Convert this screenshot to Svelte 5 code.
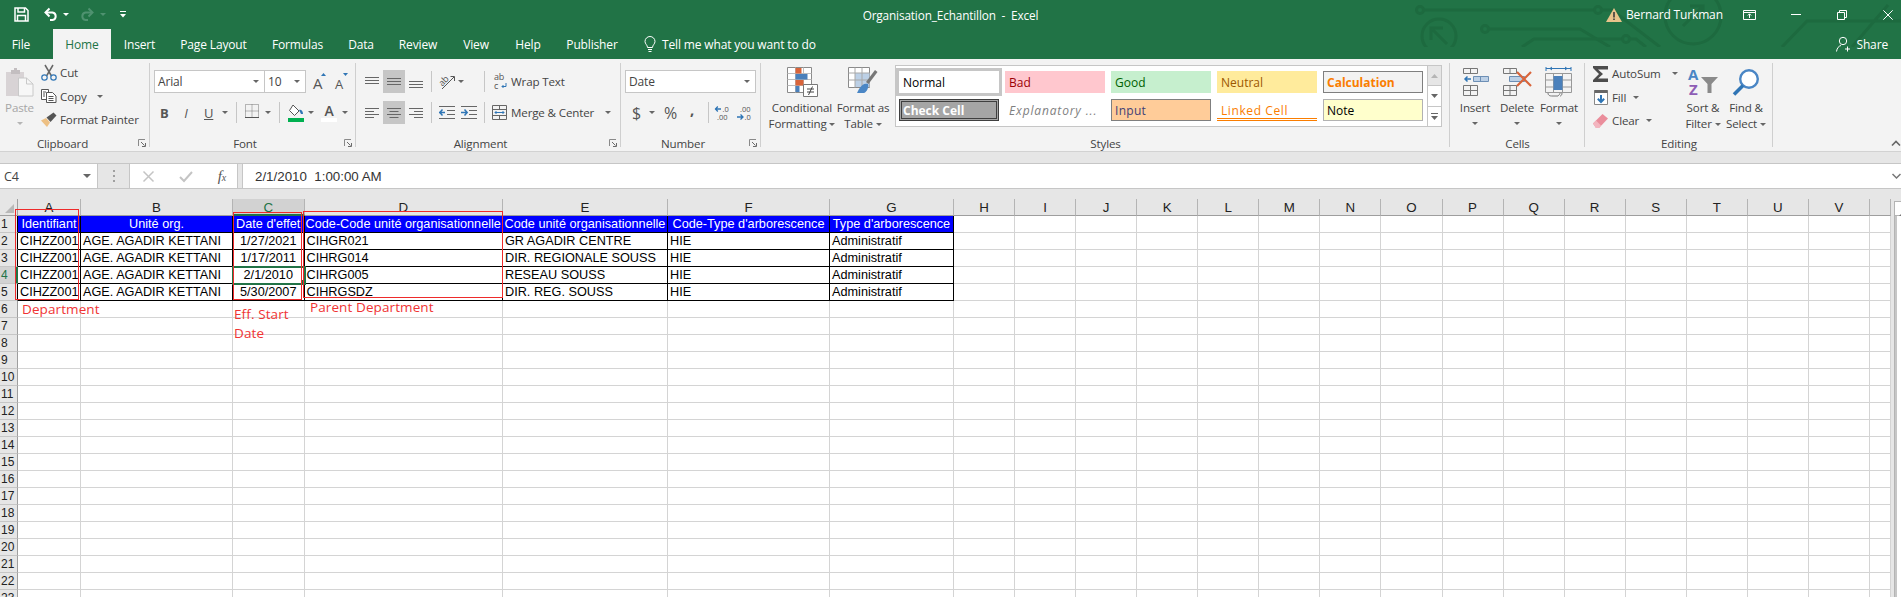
<script>
  const tabs = ["File", "Home", "Insert", "Page Layout", "Formulas", "Data", "Review", "View", "Help", "Publisher"];

  const columns = [
    { name: "A", width: 63 },
    { name: "B", width: 152 },
    { name: "C", width: 71.5 },
    { name: "D", width: 198.5 },
    { name: "E", width: 165 },
    { name: "F", width: 162 },
    { name: "G", width: 124 },
    ...["H", "I", "J", "K", "L", "M", "N", "O", "P", "Q", "R", "S", "T", "U", "V"].map((name) => ({ name, width: 61.07 })),
    { name: "", width: 21 },
  ];
  const gridColumns = "18px " + columns.map((c) => c.width + "px").join(" ");

  const header = ["Identifiant", "Unité org.", "Date d'effet", "Code-Code unité organisationnelle", "Code unité organisationnelle", "Code-Type d'arborescence", "Type d'arborescence"];
  const records = [
    ["CIHZZ001", "AGE. AGADIR KETTANI", "1/27/2021", "CIHGR021", "GR AGADIR CENTRE", "HIE", "Administratif"],
    ["CIHZZ001", "AGE. AGADIR KETTANI", "1/17/2011", "CIHRG014", "DIR. REGIONALE SOUSS", "HIE", "Administratif"],
    ["CIHZZ001", "AGE. AGADIR KETTANI", "2/1/2010", "CIHRG005", "RESEAU SOUSS", "HIE", "Administratif"],
    ["CIHZZ001", "AGE. AGADIR KETTANI", "5/30/2007", "CIHRGSDZ", "DIR. REG. SOUSS", "HIE", "Administratif"],
  ];
  const rowNumbers = Array.from({ length: 23 }, (_, i) => i + 1);

  const cellText = (row, col) => {
    if (row === 1) return header[col] ?? "";
    return records[row - 2]?.[col] ?? "";
  };
  const isTable = (row, col) => row <= 5 && col < 7;
  const isCentered = (row, col) => row === 1 || (row <= 5 && (col === 0 || col === 2));

  const styleCells = [
    { label: "Normal", cls: "normal" },
    { label: "Bad", cls: "bad" },
    { label: "Good", cls: "good" },
    { label: "Neutral", cls: "neutral" },
    { label: "Calculation", cls: "calc" },
    { label: "Check Cell", cls: "check" },
    { label: "Explanatory ...", cls: "expl" },
    { label: "Input", cls: "input" },
    { label: "Linked Cell", cls: "linked" },
    { label: "Note", cls: "memo" },
  ];
</script>

{#snippet caret()}
  <svg class="caret" width="6" height="3" viewBox="0 0 6 3"><path d="M0 0h6L3 3z" fill="#666" /></svg>
{/snippet}

{#snippet launcher()}
  <svg class="launcher" width="8" height="8" viewBox="0 0 8 8"><path d="M.5 7V.5H7" fill="none" stroke="#8a8a8a" /><path d="M3 3l3.5 3.5M7.500 4v3.500H4" fill="none" stroke="#6a6a6a" /></svg>
{/snippet}

{#snippet lines(rows)}
  <svg width="14" height="14" viewBox="0 0 14 14">
    {#each rows as r}
      <path d="M{r[0]} {r[2]}H{r[1]}" stroke="#666" stroke-width="1" />
    {/each}
  </svg>
{/snippet}

<div class="app">
  <div class="titlebar">
    <svg class="circuit" width="501" height="47" viewBox="1400 0 501 47" fill="none" stroke="#1d6a3f" stroke-width="3">
      <circle cx="1420" cy="10" r="3.5" />
      <path d="M1424 10H1594" />
      <circle cx="1598" cy="10" r="3.5" />
      <path d="M1602 10H1612L1660 47" />
      <circle cx="1439" cy="36" r="17" />
      <path d="M1447 44L1433 30M1431 40V28H1443" />
      <circle cx="1485" cy="29" r="3.5" />
      <path d="M1489 29H1580L1610 47" />
      <path d="M1522 47L1534 39H1622" />
      <circle cx="1626" cy="39" r="3.5" />
      <path d="M1630 39H1636L1646 47" />
      <circle cx="1693" cy="16" r="28" />
      <path d="M1683 26L1703 6M1690 6H1703V19" />
      <path d="M1782 47L1807 21H1901M1852 47L1888 5" />
    </svg>

    <div class="title-row">
      <div class="qat">
        <svg width="15" height="15" viewBox="0 0 15 15" fill="none" stroke="#fff" stroke-width="1.5">
          <path d="M1 1h10.5L14 3.5V14H1z" /><path d="M4 1v4h6.5V1M3.5 14V8.5h8V14" />
        </svg>
        <svg class="undo" width="15" height="15" viewBox="0 0 15 15" fill="none" stroke="#fff" stroke-width="2">
          <path d="M3 5.5h6.5a3.8 3.8 0 0 1 0 7.5H7" /><path d="M6.5 1.5L2.5 5.5l4 4" />
        </svg>
        <svg class="caret-q" width="6" height="3" viewBox="0 0 6 3"><path d="M0 0h6L3 3z" fill="#fff" /></svg>
        <svg class="redo" width="15" height="15" viewBox="0 0 15 15" fill="none" stroke="#4f9270" stroke-width="2">
          <path d="M12 5.5H5.5a3.8 3.8 0 0 0 0 7.5H8" /><path d="M8.5 1.5l4 4-4 4" />
        </svg>
        <svg class="caret-q" width="6" height="3" viewBox="0 0 6 3"><path d="M0 0h6L3 3z" fill="#4f9270" /></svg>
        <svg class="more" width="6" height="7" viewBox="0 0 6 7"><path d="M0 .5h6" stroke="#fff" /><path d="M0 3h6L3 6.5z" fill="#fff" /></svg>
      </div>
      <div class="doc-title">Organisation_Echantillon&nbsp; -&nbsp; Excel</div>
      <div class="account">
        <svg width="16" height="14" viewBox="0 0 16 14"><path d="M8 0l8 14H0z" fill="#e8c38b" /><path d="M7.2 4h1.6v5.5H7.2zM7.2 10.5h1.6V12H7.2z" fill="#3a3a3a" /></svg>
        <span class="user">Bernard Turkman</span>
        <svg class="ribbon-opt" width="13" height="10" viewBox="0 0 13 10" fill="none" stroke="#fff"><path d="M.5.500h12v9H.5zM.5 2.500h12M6.500 8V4M4.800 5.500l1.700-1.700 1.700 1.700" /></svg>
        <svg class="minimize" width="10" height="1" viewBox="0 0 10 1"><path d="M0 .5h10" stroke="#fff" /></svg>
        <svg class="restore" width="10" height="10" viewBox="0 0 10 10" fill="none" stroke="#fff"><path d="M.5 2.500h7v7h-7zM2.500 2.500v-2h7v7h-2" /></svg>
        <svg class="close" width="10" height="10" viewBox="0 0 10 10" fill="none" stroke="#fff"><path d="M.3.3l9.400 9.400M9.700.3L.3 9.700" /></svg>
      </div>
    </div>

    <div class="tab-row">
      <div class="tabs">
        {#each tabs as tab}
          <div class="tab" class:active={tab === "Home"}>{tab}</div>
        {/each}
      </div>
      <svg class="bulb" width="12" height="17" viewBox="0 0 12 17" fill="none" stroke="#fff"><path d="M3.500 11.500C3.500 9 1 8 1 5.500a5 5 0 0 1 10 0C11 8 8.500 9 8.500 11.500zM4 13.500h4M4.500 15.500h3" /></svg>
      <div class="tell">Tell me what you want to do</div>
      <div class="share">
        <svg width="14" height="16" viewBox="0 0 14 16" fill="none" stroke="#fff"><circle cx="7" cy="5" r="3.700" /><path d="M.5 15.500c.5-3.500 2.300-5.500 4.500-6M9 13h5M11.500 10.500v5" /></svg>
        <span>Share</span>
      </div>
    </div>
  </div>

  <div class="ribbon">
    <section class="group w-clip">
      <div class="body flex">
        <div class="big paste">
          <svg width="29" height="30" viewBox="0 0 29 30">
            <path d="M1 5h18v24H1z" fill="#d8d3d5" /><path d="M6 3h3V1h3v2h3v4H6z" fill="#c3bec0" />
            <path d="M13.500 11h8l6.500 6v12H13.500z" fill="#f7f7f7" stroke="#c9c9c9" /><path d="M21.500 11v6h6.500" fill="none" stroke="#c9c9c9" />
          </svg>
          <div class="big-label dim">Paste</div>
          <svg class="caret second" width="6" height="3" viewBox="0 0 6 3"><path d="M0 0h6L3 3z" fill="#b5b5b5" /></svg>
        </div>
        <div class="small-col">
          <div class="small-row">
            <svg width="16" height="16" viewBox="0 0 16 16" fill="none"><path d="M4 0l6.500 11M12 0L5.500 11" stroke="#666" stroke-width="1.500" /><circle cx="3.500" cy="12.500" r="2.700" stroke="#2f75b5" stroke-width="1.200" /><circle cx="12.500" cy="12.500" r="2.700" stroke="#2f75b5" stroke-width="1.200" /></svg>
            <span class="ml3">Cut</span>
          </div>
          <div class="small-row">
            <svg width="16" height="14" viewBox="0 0 16 14" fill="#fff" stroke="#555"><path d="M.5.500h7v10h-7z" /><path d="M5.500 3.500h6l3.500 3.500v6.500H5.500z" /><path d="M7.500 7.500h5M7.500 9.500h5M7.500 11.500h5M2 3h3M2 5h2M2 7h2" fill="none" /></svg>
            <span class="ml3 w-copy">Copy</span>
            {@render caret()}
          </div>
          <div class="small-row">
            <svg width="16" height="15" viewBox="0 0 16 15"><path d="M0 8.500l5-2.500 4 4.500-3 4.500z" fill="#edc084" /><path d="M5.500 5.500L12.500.5l3 3L9.500 10z" fill="#555" /></svg>
            <span class="ml3">Format Painter</span>
          </div>
        </div>
      </div>
      <div class="label-row pr9"><span class="group-label">Clipboard</span>{@render launcher()}</div>
    </section>

    <section class="group w-font">
      <div class="body two-rows">
        <div class="row ml4">
          <div class="combo w-fontname"><span>Arial</span>{@render caret()}</div>
          <div class="combo w-fontsize"><span>10</span>{@render caret()}</div>
          <svg class="ml7" width="13" height="17" viewBox="0 0 13 17"><text x="0" y="16" class="ico-a big-a">A</text><path d="M8 3l2.500-3L13 3z" fill="#2f75b5" /></svg>
          <svg class="ml9" width="13" height="17" viewBox="0 0 13 17"><text x="0" y="16" class="ico-a">A</text><path d="M8 0h5l-2.500 3z" fill="#2f75b5" /></svg>
        </div>
        <div class="row">
          <b class="fmt ml10">B</b>
          <i class="fmt ml14">I</i>
          <u class="fmt w9 ml14">U</u>
          <span class="ml9 flexc">{@render caret()}</span>
          <span class="sep ml8"></span>
          <svg class="ml8" width="18" height="18" viewBox="0 0 18 18" fill="none" stroke="#777" stroke-dasharray="1 1"><path d="M.5.500h13v13H.5zM7 .5v13M.5 7h13" /><path d="M0 13.500h14" stroke="#555" stroke-dasharray="none" /></svg>
          <span class="ml2 flexc">{@render caret()}</span>
          <span class="sep ml8"></span>
          <svg class="ml8" width="16" height="18" viewBox="0 0 16 18"><path d="M5 1l6 6-4.500 4.500-5-5z" fill="#fff" stroke="#555" /><path d="M11 6c2-1 4 1 4 4h-2z" fill="#2f75b5" /><path d="M0 14h16v4H0z" fill="#00b050" /></svg>
          <span class="ml4 flexc">{@render caret()}</span>
          <div class="color-a ml7">A</div>
          <span class="ml5 flexc">{@render caret()}</span>
        </div>
      </div>
      <div class="label-row"><span class="group-label">Font</span>{@render launcher()}</div>
    </section>

    <section class="group w-align">
      <div class="body two-rows">
        <div class="row">
          <div class="align-btn ml5">{@render lines([[0, 14, 2.5], [0, 14, 5.5], [0, 14, 8.5]])}</div>
          <div class="align-btn on">{@render lines([[0, 14, 3.5], [0, 14, 6.5], [0, 14, 9.5]])}</div>
          <div class="align-btn">{@render lines([[0, 14, 6.5], [0, 14, 9.5], [0, 14, 12.5]])}</div>
          <span class="sep ml4"></span>
          <svg class="ml7" width="17" height="17" viewBox="0 0 17 17"><text x="0" y="10" class="ico-ab" transform="rotate(-45 6 8)">ab</text><path d="M3 16L15 4M11.500 3.500H15.500V8" fill="none" stroke="#555" /></svg>
          <span class="ml2 flexc">{@render caret()}</span>
          <span class="sep ml20"></span>
          <svg class="ml9" width="13" height="17" viewBox="0 0 13 17"><text x="0" y="7" class="ico-ab">ab</text><text x="0" y="16" class="ico-ab">c</text><path d="M12 10v3.500H8M9.500 12L8 13.500 9.500 15" fill="none" stroke="#2f75b5" /></svg>
          <span class="ml4">Wrap Text</span>
        </div>
        <div class="row">
          <div class="align-btn ml5">{@render lines([[0, 14, 2.5], [0, 9, 5.5], [0, 14, 8.5], [0, 9, 11.5]])}</div>
          <div class="align-btn on">{@render lines([[0, 14, 2.5], [2.5, 11.5, 5.5], [0, 14, 8.5], [2.5, 11.5, 11.5]])}</div>
          <div class="align-btn">{@render lines([[0, 14, 2.5], [5, 14, 5.5], [0, 14, 8.5], [5, 14, 11.5]])}</div>
          <span class="sep ml4"></span>
          <svg class="ml7" width="16" height="14" viewBox="0 0 16 14"><path d="M0 .5h16M8 4.500h8M8 8.500h8M0 12.500h16" stroke="#666" /><path d="M0 6.500h6M3.500 3.500L.8 6.500l2.700 3" fill="none" stroke="#2f75b5" stroke-width="1.500" /></svg>
          <svg class="ml6" width="16" height="14" viewBox="0 0 16 14"><path d="M0 .5h16M8 4.500h8M8 8.500h8M0 12.500h16" stroke="#666" /><path d="M0 6.500h6M3.500 3.500l2.700 3-2.700 3" fill="none" stroke="#2f75b5" stroke-width="1.500" /></svg>
          <span class="sep ml7"></span>
          <svg class="ml7" width="15" height="15" viewBox="0 0 15 15" fill="none"><path d="M.5.500h14v14H.5zM.5 4.500h14M.5 10.500h14M7.500.5v4M7.500 10.500v4" stroke="#666" /><path d="M3 7.500h9M4.500 6L3 7.500 4.500 9M10.500 6L12 7.500 10.500 9" stroke="#2f75b5" /></svg>
          <span class="ml4 w-merge">Merge &amp; Center</span>
          <span class="ml9 flexc">{@render caret()}</span>
        </div>
      </div>
      <div class="label-row"><span class="group-label">Alignment</span>{@render launcher()}</div>
    </section>

    <section class="group w-number">
      <div class="body two-rows">
        <div class="row ml4">
          <div class="combo w-numfmt"><span>Date</span>{@render caret()}</div>
        </div>
        <div class="row">
          <span class="fmt-big ml11">$</span>
          <span class="ml9 flexc">{@render caret()}</span>
          <span class="fmt-big w12 ml9">%</span>
          <b class="comma ml14">,</b>
          <span class="sep ml13"></span>
          <svg class="ml6" width="16" height="16" viewBox="0 0 16 16"><path d="M0 4h6M2.800 1.500L.5 4l2.300 2.500" fill="none" stroke="#2f75b5" stroke-width="1.300" /><text x="7.500" y="6.500" class="ico-dec">.0</text><text x="2" y="14.500" class="ico-dec">.00</text></svg>
          <svg class="ml6" width="16" height="16" viewBox="0 0 16 16"><text x="3" y="6.500" class="ico-dec">.00</text><path d="M0 12h6M3.500 9.500L6 12l-2.500 2.500" fill="none" stroke="#2f75b5" stroke-width="1.300" /><text x="7.500" y="14.500" class="ico-dec">.0</text></svg>
        </div>
      </div>
      <div class="label-row"><span class="group-label">Number</span>{@render launcher()}</div>
    </section>

    <section class="group w-styles">
      <div class="body flex">
        <div class="big w-cond ml5">
          <svg width="31" height="30" viewBox="0 0 31 30">
            <path d="M.5.500h24v25H.5z" fill="#fff" stroke="#8a8a8a" />
            <path d="M8.500.5v25M16.500.5v25M.5 6.500h24M.5 12.500h24M.5 18.500h24" stroke="#bdbdbd" />
            <path d="M8.500 1h6v5.500h-6zM8.500 13h8v5.500h-8z" fill="#d9643a" /><path d="M8.500 7h12v5.500h-12zM8.500 19h4v6h-4z" fill="#4a80bb" />
            <path d="M16.500 17.500h14v12h-14z" fill="#fff" stroke="#777" /><path d="M20 22h7M20 25h7M25.500 19.500l-4 8.500" stroke="#444" fill="none" />
          </svg>
          <div class="big-label">Conditional</div>
          <div class="big-label">Formatting {@render caret()}</div>
        </div>
        <div class="big w-table">
          <svg width="30" height="30" viewBox="0 0 30 30">
            <path d="M.5.500h21v20H.5z" fill="#fff" stroke="#8a8a8a" /><path d="M7 6h14.500v14H7z" fill="#bcd0e6" />
            <path d="M7 .5v20M14 .5v20M.5 6h21M.5 13h21" stroke="#a8a8a8" />
            <path d="M18 15L27 3l2.500 2-9 12z" fill="#777" /><path d="M11 22c3-5 6-6 9-5 1 3-1 8-4 9h-7z" fill="#4a86c5" />
          </svg>
          <div class="big-label">Format as</div>
          <div class="big-label">Table {@render caret()}</div>
        </div>
        <div class="gallery ml7">
          {#each styleCells as s}
            <div class="style-cell {s.cls}">{s.label}</div>
          {/each}
        </div>
        <div class="gallery-scroll">
          <div class="gs off"><svg width="7" height="4" viewBox="0 0 7 4"><path d="M0 4L3.500 0 7 4z" fill="#b5b5b5" /></svg></div>
          <div class="gs"><svg width="7" height="4" viewBox="0 0 7 4"><path d="M0 0h7L3.500 4z" fill="#666" /></svg></div>
          <div class="gs"><svg width="7" height="7" viewBox="0 0 7 7"><path d="M0 .5h7" stroke="#666" /><path d="M0 3h7L3.500 7z" fill="#666" /></svg></div>
        </div>
      </div>
      <div class="label-row plain"><span class="group-label">Styles</span></div>
    </section>

    <section class="group w-cells">
      <div class="body flex">
        <div class="big w42 ml4">
          <svg width="27" height="28" viewBox="0 0 27 28" fill="none" stroke="#777">
            <path d="M1.500.5h14v5h-14zM8.500.5v5M1.500 17.500h14v10h-14zM8.500 17.500v10M1.500 22.500h14" />
            <path d="M11.500 8.500h15v5h-15z" fill="#bcd0e6" stroke="#6d8fb5" /><path d="M18.500 8.500v5" stroke="#6d8fb5" />
            <path d="M3 11h6M5.500 8.500L3 11l2.500 2.500" stroke="#2f75b5" stroke-width="1.500" />
          </svg>
          <div class="big-label">Insert</div>
          <svg class="caret second" width="6" height="3" viewBox="0 0 6 3"><path d="M0 0h6L3 3z" fill="#666" /></svg>
        </div>
        <div class="big w42">
          <svg width="30" height="28" viewBox="0 0 30 28" fill="none" stroke="#777">
            <path d="M1.500.5h13v5h-13zM8 .5v5M1.500 17.500h13v10h-13zM8 17.500v10M1.500 22.500h13" />
            <path d="M7.500 8.500h15v5h-15z" fill="#bcd0e6" stroke="#6d8fb5" />
            <path d="M15 4l14 14M29 4L15 18" stroke="#d9643a" stroke-width="2.200" />
          </svg>
          <div class="big-label">Delete</div>
          <svg class="caret second" width="6" height="3" viewBox="0 0 6 3"><path d="M0 0h6L3 3z" fill="#666" /></svg>
        </div>
        <div class="big w42">
          <svg width="28" height="30" viewBox="0 0 28 30" fill="none" stroke="#999">
            <path d="M1 1.500h25M1 0v4M26 0v4M5 1.500L7 0M5 1.500L7 3M22 1.500L20 0M22 1.500L20 3" stroke="#2f75b5" />
            <path d="M.5 6.500h26v19H.5zM8.500 6.500v19M17.500 6.500v19M.5 13h26M.5 20h26" />
            <path d="M8.500 9h9v14h-9z" fill="#4a80bb" stroke="none" />
            <path d="M3 26c0 3 3 3 4 3h6c1-1 2-2 2-3M17 26c0 2-1 3-2 3" stroke="#777" />
          </svg>
          <div class="big-label">Format</div>
          <svg class="caret second" width="6" height="3" viewBox="0 0 6 3"><path d="M0 0h6L3 3z" fill="#666" /></svg>
        </div>
      </div>
      <div class="label-row plain"><span class="group-label">Cells</span></div>
    </section>

    <section class="group w-edit">
      <div class="body flex">
        <div class="small-col edit-col ml8">
          <div class="small-row">
            <svg width="16" height="16" viewBox="0 0 16 16"><path d="M0 0h15v3.500H5l5 4.500-5 4.500h10V16H0v-2l6-6-6-6z" fill="#4c4c4c" /></svg>
            <span class="ml3 w-sum">AutoSum</span>
            <span class="ml6 flexc">{@render caret()}</span>
          </div>
          <div class="small-row">
            <svg width="16" height="16" viewBox="0 0 16 16" fill="none"><path d="M1.500 1.500h13v14h-13z" fill="#fff" stroke="#888" /><path d="M1.500 1h13v3h-13z" fill="#666" /><path d="M8 6v7M4.800 9.800L8 13l3.200-3.200" stroke="#2f75b5" stroke-width="2" /></svg>
            <span class="ml3">Fill</span>
            <span class="ml2 flexc">{@render caret()}</span>
          </div>
          <div class="small-row">
            <svg width="16" height="14" viewBox="0 0 16 14"><path d="M0 9.500L9.500 0 15 4.500 6 14H3z" fill="#ea8d9b" /><path d="M0 9.500L3 6.500l5 5L6 14H3z" fill="#f3b5bf" /></svg>
            <span class="ml3">Clear</span>
            <span class="ml2 flexc">{@render caret()}</span>
          </div>
        </div>
        <div class="big w44">
          <svg width="31" height="28" viewBox="0 0 31 28">
            <text x="0" y="12" class="sort-a">A</text><text x="1" y="27" class="sort-z">Z</text>
            <path d="M13 9h17l-6.500 7v9h-4v-9z" fill="#8a8a8a" />
          </svg>
          <div class="big-label">Sort &amp;</div>
          <div class="big-label">Filter {@render caret()}</div>
        </div>
        <div class="big w42">
          <svg width="28" height="28" viewBox="0 0 28 28" fill="none"><circle cx="17" cy="11" r="8.800" stroke="#4a86c5" stroke-width="2.400" fill="#fff" /><path d="M11 17.500L2 26.500" stroke="#2f75b5" stroke-width="3.600" /></svg>
          <div class="big-label">Find &amp;</div>
          <div class="big-label">Select {@render caret()}</div>
        </div>
      </div>
      <div class="label-row plain"><span class="group-label">Editing</span></div>
    </section>

    <svg class="collapse" width="10" height="6" viewBox="0 0 10 6" fill="none" stroke="#666" stroke-width="1.600"><path d="M1 5.500L5 1.500l4 4" /></svg>
  </div>

  <div class="band"></div>

  <div class="formula-bar">
    <div class="name-box"><span>C4</span><svg width="8" height="4" viewBox="0 0 8 4"><path d="M0 0h8L4 4z" fill="#666" /></svg></div>
    <div class="grip"><i></i><i></i><i></i></div>
    <div class="fx-box">
      <svg width="11" height="11" viewBox="0 0 11 11" fill="none" stroke="#c4c4c4" stroke-width="1.500"><path d="M.5.500l10 10M10.500.5l-10 10" /></svg>
      <svg width="14" height="11" viewBox="0 0 14 11" fill="none" stroke="#c4c4c4" stroke-width="2"><path d="M1 6l4 4 8-9" /></svg>
      <span class="fx">f<small>x</small></span>
    </div>
    <div class="formula-input">
      <span>2/1/2010&nbsp; 1:00:00 AM</span>
      <svg width="9" height="6" viewBox="0 0 9 6" fill="none" stroke="#777" stroke-width="1.500"><path d="M.5 1l4 4 4-4" /></svg>
    </div>
  </div>

  <div class="band low"></div>

  <div class="sheet-wrap">
    <div class="sheet" style:grid-template-columns={gridColumns}>
      <div class="corner"><svg width="9" height="9" viewBox="0 0 9 9"><path d="M9 0v9H0z" fill="#b8b8b8" /></svg></div>
      {#each columns as col}
        <div class="col-head" class:selected={col.name === "C"}>{col.name}</div>
      {/each}
      {#each rowNumbers as row}
        <div class="row-head" class:dark={row <= 5} class:selected={row === 4}><span>{row}</span></div>
        {#each columns as _, c}
          <div
            class="cell"
            class:head={row === 1 && c < 7}
            class:table={isTable(row, c)}
            class:center={isCentered(row, c)}
            class:current={row === 4 && c === 2}
          >{cellText(row, c)}</div>
        {/each}
      {/each}

      <div class="mark mark-a"></div>
      <div class="mark mark-c"></div>
      <div class="mark mark-d"></div>
      <div class="tag tag-a">Department</div>
      <div class="tag tag-c">Eff. Start<br />Date</div>
      <div class="tag tag-d">Parent Department</div>
    </div>
    <div class="sheet-rail">
      <div class="rail-up"><svg width="6" height="6" viewBox="0 0 6 6"><path d="M0 6L6 0v6z" fill="#777" /></svg></div>
      <div class="rail-track"></div>
    </div>
  </div>
</div>

<style>
  :global(body) {
    margin: 0;
    font-family: "Open Sans", "Noto Sans", sans-serif;
  }

  svg {
    overflow: visible;
  }

  .app {
    width: 1901px;
    height: 597px;
    overflow: hidden;
    display: flex;
    flex-direction: column;
    background: #e6e6e6;
    font-size: 11.6px;
    letter-spacing: -0.15px;
    color: #444;
  }

  /* title bar */
  .titlebar {
    position: relative;
    height: 59px;
    flex: none;
    background: #217346;
    color: #fff;
  }

  .circuit {
    position: absolute;
    right: 0;
    top: 0;
    overflow: hidden;
  }

  .title-row {
    position: relative;
    height: 29px;
    display: grid;
    grid-template-columns: 1fr auto 1fr;
    align-items: center;
  }

  .qat {
    display: flex;
    align-items: center;
    padding-left: 14px;
  }

  .undo { margin-left: 14px; }
  .caret-q { margin-left: 5px; }
  .redo { margin-left: 11px; }
  .more { margin-left: 14px; }

  .doc-title {
    font-size: 11.8px;
  }

  .account {
    display: flex;
    align-items: center;
    justify-content: flex-end;
    padding-right: 8px;
  }

  .user {
    margin-left: 4px;
    width: 91px;
    font-size: 12px;
    white-space: nowrap;
  }

  .ribbon-opt { margin-left: 26px; }
  .minimize { margin-left: 35px; }
  .restore { margin-left: 36px; }
  .close { margin-left: 36px; }

  .tab-row {
    position: relative;
    height: 30px;
    display: flex;
    align-items: center;
    font-size: 12px;
  }

  .tabs {
    display: grid;
    grid-template-columns: 42px 69px 57px 91px 77px 50px 64px 52px 52px 76px;
    height: 100%;
  }

  .tab {
    display: flex;
    align-items: center;
    justify-content: center;
    white-space: nowrap;
  }

  .tab.active {
    margin-left: 11px;
    background: #f3f3f3;
    color: #217346;
  }

  .bulb { margin-left: 14px; }

  .tell {
    margin-left: 6px;
    white-space: nowrap;
  }

  .share {
    margin-left: auto;
    padding-right: 13px;
    display: flex;
    align-items: center;
    gap: 6px;
  }

  /* ribbon */
  .ribbon {
    position: relative;
    flex: none;
    height: 93px;
    box-sizing: border-box;
    display: flex;
    background: #f3f3f3;
    border-bottom: 1px solid #d2d2d2;
  }

  .group {
    position: relative;
    box-sizing: border-box;
    margin-top: 4px;
    height: 88px;
    display: flex;
    flex-direction: column;
  }

  .group::after {
    content: "";
    position: absolute;
    right: 0;
    top: 0;
    bottom: 4px;
    width: 1px;
    background: #cfcfcf;
  }

  .w-clip { width: 150px; }
  .w-font { width: 206px; }
  .w-align { width: 265px; }
  .w-number { width: 140px; }
  .w-styles { width: 689px; }
  .w-cells { width: 135px; }
  .w-edit { width: 188px; }

  .body {
    height: 72px;
    flex: none;
    white-space: nowrap;
  }

  .flex { display: flex; }

  .two-rows {
    box-sizing: border-box;
    padding-top: 7px;
    display: flex;
    flex-direction: column;
    gap: 8px;
  }

  .row {
    height: 23px;
    display: flex;
    align-items: center;
  }

  .label-row {
    height: 16px;
    display: flex;
    align-items: center;
  }

  .group-label {
    flex: 1;
    text-align: center;
    color: #444;
  }

  .pr9 .group-label { margin-right: 9px; }

  .launcher {
    flex: none;
    margin: 0 4px;
  }

  .big {
    display: flex;
    flex-direction: column;
    align-items: center;
    padding-top: 4px;
  }

  .big > svg:first-child {
    height: 30px;
    flex: none;
  }

  .big-label {
    line-height: 16px;
    white-space: nowrap;
    margin-top: 3px;
  }

  .big-label + .big-label {
    margin-top: 0;
  }

  .big-label .caret {
    vertical-align: middle;
  }

  .dim { color: #a6a6a6; }

  .caret.second {
    margin-top: 6px;
    flex: none;
  }

  .paste {
    width: 33px;
    margin-left: 3px;
  }

  .small-col {
    display: flex;
    flex-direction: column;
    margin-top: -2px;
    margin-left: 5px;
  }

  .small-row {
    height: 23.5px;
    display: flex;
    align-items: center;
  }

  .small-row svg:first-child {
    width: 16px;
    flex: none;
  }

  .edit-col {
    margin-top: -1px;
    margin-left: 8px;
    width: 88px;
  }

  .w-copy { width: 37px; }
  .w-sum { width: 50px; }
  .w-merge { width: 85px; }
  .w-cond { width: 72px; }
  .w-table { width: 50px; }
  .w42 { width: 42px; }
  .w44 { width: 44px; }

  .ml2 { margin-left: 2px; }
  .ml3 { margin-left: 3px; }
  .ml4 { margin-left: 4px; }
  .ml5 { margin-left: 5px; }
  .ml6 { margin-left: 6px; }
  .ml7 { margin-left: 7px; }
  .ml8 { margin-left: 8px; }
  .ml9 { margin-left: 9px; }
  .ml10 { margin-left: 10px; }
  .ml11 { margin-left: 11px; }
  .ml13 { margin-left: 13px; }
  .ml14 { margin-left: 14px; }
  .ml20 { margin-left: 20px; }

  .flexc {
    display: flex;
    align-items: center;
  }

  .combo {
    box-sizing: border-box;
    height: 23px;
    background: #fff;
    border: 1px solid #c6c6c6;
    display: flex;
    align-items: center;
    justify-content: space-between;
    padding: 0 5px 0 3px;
    font-size: 12px;
    color: #444;
  }

  .w-fontname { width: 111px; }
  .w-fontsize { width: 42px; margin-left: -1px; }
  .w-numfmt { width: 131px; }

  .sep {
    display: block;
    width: 1px;
    height: 21px;
    background: #c6c6c6;
  }

  .fmt {
    width: 8px;
    text-align: center;
    font-size: 13px;
    color: #555;
  }

  .w9 { width: 9px; }

  .fmt-big {
    width: 8px;
    font-size: 16px;
    text-align: center;
    color: #555;
  }

  .w12 { width: 12px; }

  .comma {
    width: 5px;
    font-size: 15px;
    line-height: 10px;
    margin-bottom: 8px;
    color: #555;
  }

  .color-a {
    box-sizing: border-box;
    width: 16px;
    height: 18px;
    text-align: center;
    font-size: 14px;
    font-weight: 600;
    line-height: 14px;
    color: #555;
    border-bottom: 4px solid #fff;
  }

  .ico-a {
    font-family: "Open Sans", sans-serif;
    font-size: 13px;
    fill: #555;
  }

  .big-a { font-size: 15px; }

  .ico-ab {
    font-family: "Open Sans", sans-serif;
    font-size: 9px;
    fill: #555;
  }

  .ico-dec {
    font-family: "Open Sans", sans-serif;
    font-size: 7.500px;
    letter-spacing: 0;
    fill: #555;
  }

  .sort-a, .sort-z {
    font-family: "Open Sans", sans-serif;
    font-size: 15px;
    font-weight: 700;
  }

  .sort-a { fill: #4a86c5; }
  .sort-z { fill: #8e5db5; }

  .align-btn {
    width: 22px;
    height: 23px;
    display: flex;
    align-items: center;
    justify-content: center;
  }

  .align-btn.on { background: #c6c6c6; }

  /* styles gallery */
  .gallery {
    box-sizing: border-box;
    width: 533px;
    height: 62px;
    margin-top: 2px;
    padding: 5px 4px 5px 3px;
    display: grid;
    grid-template-columns: repeat(5, 100px);
    grid-auto-rows: 22px;
    gap: 6px;
    background: #fff;
    border: 1px solid #c6c6c6;
  }

  .style-cell {
    box-sizing: border-box;
    display: flex;
    align-items: center;
    padding-left: 4px;
    font-size: 12px;
    letter-spacing: 0;
    color: #000;
  }

  .normal { outline: 3px solid #c6c6c6; }
  .bad { background: #ffc7ce; color: #9c0006; }
  .good { background: #c6efce; color: #006100; }
  .neutral { background: #ffeb9c; color: #9c5700; }
  .calc { background: #f2f2f2; color: #fa7d00; font-weight: 700; border: 1px solid #7f7f7f; padding-left: 3px; }
  .check { background: #a5a5a5; color: #fff; font-weight: 700; border: 3px double #3f3f3f; padding-left: 1px; }
  .expl { color: #7f7f7f; font-style: italic; letter-spacing: 0.85px; }
  .input { background: #fc9; color: #3f3f76; border: 1px solid #7f7f7f; padding-left: 3px; letter-spacing: 0.3px; }
  .linked { color: #fa7d00; border-bottom: 3px double #fa7d00; padding-top: 3px; letter-spacing: 0.6px; }
  .memo { background: #ffc; border: 1px solid #b2b2b2; padding-left: 3px; }

  .gallery-scroll {
    margin-top: 2px;
    width: 14px;
    height: 62px;
    display: flex;
    flex-direction: column;
  }

  .gs {
    box-sizing: border-box;
    flex: 1;
    display: flex;
    align-items: center;
    justify-content: center;
    background: #fff;
    border: 1px solid #c6c6c6;
    border-left: 0;
    margin-top: -1px;
  }

  .gs:first-child { margin-top: 0; }
  .gs.off { background: #e6e6e6; }

  .collapse {
    position: absolute;
    right: 0;
    top: 81px;
  }

  /* formula bar */
  .band {
    flex: none;
    height: 11px;
    background: #e6e6e6;
  }

  .band.low {
    height: 10px;
    border-top: 1px solid #c6c6c6;
  }

  .formula-bar {
    flex: none;
    height: 24px;
    display: flex;
    border-top: 1px solid #c6c6c6;
    background: #e6e6e6;
  }

  .name-box {
    box-sizing: border-box;
    width: 98px;
    display: flex;
    align-items: center;
    justify-content: space-between;
    padding: 0 6px 0 4px;
    background: #fff;
    border-right: 1px solid #c6c6c6;
    font-size: 12.500px;
    color: #444;
  }

  .grip {
    width: 31px;
    display: flex;
    flex-direction: column;
    align-items: center;
    justify-content: center;
    gap: 3px;
  }

  .grip i {
    width: 2px;
    height: 2px;
    background: #a0a0a0;
  }

  .fx-box {
    box-sizing: border-box;
    width: 109px;
    display: flex;
    align-items: center;
    justify-content: space-between;
    padding: 0 11px 0 13px;
    background: #fff;
    border-left: 1px solid #c6c6c6;
    border-right: 1px solid #c6c6c6;
  }

  .fx {
    font-family: "Liberation Serif", serif;
    font-style: italic;
    font-size: 15px;
    color: #555;
  }

  .fx small { font-size: 10px; }

  .formula-input {
    flex: 1;
    margin-left: 4px;
    padding: 0 0 0 12px;
    display: flex;
    align-items: center;
    justify-content: space-between;
    background: #fff;
    border-left: 1px solid #c6c6c6;
    font-family: "Liberation Sans", sans-serif;
    font-size: 13.330px;
    letter-spacing: 0;
    color: #333;
  }

  /* worksheet */
  .sheet-wrap {
    flex: 1;
    display: flex;
    min-height: 0;
    background: #e6e6e6;
  }

  .sheet {
    position: relative;
    width: 1891px;
    flex: none;
    display: grid;
    grid-auto-rows: 17px;
    grid-template-rows: 17px;
    font-family: "Liberation Sans", sans-serif;
    font-size: 12.700px;
    letter-spacing: 0;
    color: #000;
  }

  .corner {
    display: flex;
    align-items: flex-end;
    justify-content: flex-end;
    padding: 0 3px 2px 0;
    box-sizing: border-box;
    background: #e6e6e6;
    border-right: 1px solid #a0a0a0;
    border-bottom: 1px solid #a0a0a0;
  }

  .col-head {
    box-sizing: border-box;
    background: #e6e6e6;
    text-align: center;
    font-size: 13.330px;
    line-height: 17px;
    color: #222;
    border-right: 1px solid #b4b4b4;
    border-bottom: 1px solid #9e9e9e;
  }

  .col-head.selected {
    background: #d2d2d2;
    border-bottom: 2px solid #217346;
    color: #217346;
  }

  .row-head {
    box-sizing: border-box;
    background: #e6e6e6;
    border-right: 1px solid #9e9e9e;
    border-bottom: 1px solid #c6c6c6;
    font-size: 12px;
    line-height: 17px;
    color: #222;
    padding-left: 1px;
    white-space: nowrap;
  }

  .row-head.dark { border-right-color: #000; }

  .row-head.selected {
    background: #d2d2d2;
    border-right: 2px solid #217346;
    color: #217346;
  }

  .cell {
    box-sizing: border-box;
    background: #fff;
    border-right: 1px solid #d4d4d4;
    border-bottom: 1px solid #d4d4d4;
    padding: 0 2px;
    line-height: 17px;
    white-space: nowrap;
  }

  .cell.table {
    border-right-color: #000;
    border-bottom-color: #000;
  }

  .cell.center { text-align: center; }

  .cell.head {
    background: #00f;
    color: #fff;
    padding: 0;
  }

  .cell.current {
    outline: 2px solid #217346;
    outline-offset: -1px;
    position: relative;
  }

  .cell.current::after {
    content: "";
    position: absolute;
    right: -2px;
    bottom: -2px;
    width: 5px;
    height: 5px;
    background: #217346;
  }

  /* red annotations drawn over the sheet */
  .mark {
    position: absolute;
    box-sizing: border-box;
    border: 1px solid #ee2b2b;
  }

  .mark-a { left: 15px; top: 10px; width: 64px; height: 91px; }
  .mark-c { left: 233px; top: 13px; width: 69px; height: 88px; }
  .mark-d { left: 303px; top: 12px; width: 200px; height: 87px; }

  .tag {
    position: absolute;
    font-family: "Open Sans", sans-serif;
    font-size: 13.500px;
    letter-spacing: 0.1px;
    color: #f03434;
    white-space: nowrap;
  }

  .tag-a { left: 22px; top: 101px; }
  .tag-c { left: 234px; top: 106px; line-height: 19px; }
  .tag-d { left: 310px; top: 99px; }

  .sheet-rail {
    flex: 1;
    margin-left: 3px;
    margin-top: 2px;
    display: flex;
    flex-direction: column;
    background: #fff;
    border-left: 1px solid #b4b4b4;
  }

  .rail-up {
    box-sizing: border-box;
    height: 15px;
    padding: 5px 0 0 1px;
    border-top: 1px solid #b4b4b4;
    border-bottom: 1px solid #b4b4b4;
  }

  .rail-track {
    flex: 1;
    background: #fff;
    border-left: 2px solid #c6c6c6;
  }
</style>
